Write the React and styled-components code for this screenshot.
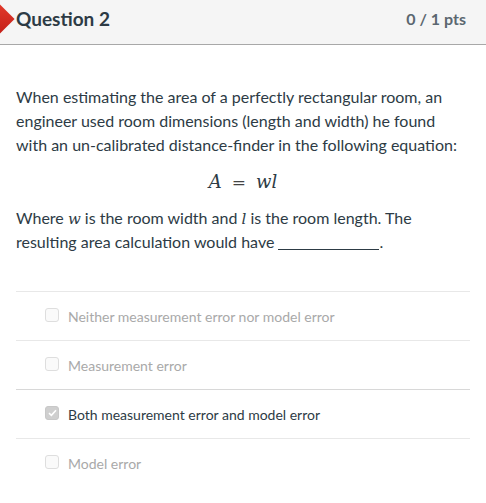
import styled, { createGlobalStyle } from 'styled-components';

const GlobalStyle = createGlobalStyle`
  html, body {
    margin: 0;
    padding: 0;
    background: #fff;
    font-family: Lato, "Liberation Sans", sans-serif;
    color: #2d3b45;
  }
`;

const Page = styled.div`
  width: 486px;
  height: 503px;
  overflow: hidden;
  background: #fff;
`;

const Header = styled.div`
  position: relative;
  box-sizing: border-box;
  height: 45px;
  background: #f5f5f5;
  border-bottom: 1px solid #a8a8a8;
  display: flex;
  align-items: center;
  justify-content: space-between;
  padding: 0 20px 7px 16px;
`;

const Flag = styled.span`
  position: absolute;
  left: -12px;
  top: 8px;
  width: 22px;
  height: 22px;
  background: linear-gradient(135deg, #e23a2c, #c41f18);
  transform: rotate(45deg);
`;

const Title = styled.h2`
  margin: 0;
  font-size: 19px;
  font-weight: 700;
  color: #2d3b45;
`;

const Points = styled.div`
  font-size: 16px;
  font-weight: 700;
  color: #5b6770;
`;

const Body = styled.div`
  padding: 40px 16px 0 16px;
`;

const Text = styled.p`
  margin: 0;
  font-size: 16px;
  line-height: 24px;
  color: #2d3b45;
`;

const Equation = styled.div`
  margin: 10px 0 10px;
  text-align: center;
  font-size: 18px;
  line-height: 28px;
  color: #2d3b45;
`;

const MathVar = styled.i`
  font-family: "DejaVu Serif", "Liberation Serif", serif;
  font-size: ${p => (p.$big ? '18px' : '15px')};
  font-style: italic;
  line-height: 1;
`;

const Eq = styled.span`
  display: inline-block;
  margin: 0 10px;
  font-family: "DejaVu Serif", serif;
  font-size: 17px;
  color: #444;
`;

const Blank = styled.span`
  display: inline-block;
  width: 101px;
  border-bottom: 1px solid #2d3b45;
  vertical-align: -2px;
`;

const Answers = styled.div`
  margin-top: 37px;
`;

const Answer = styled.label`
  display: flex;
  align-items: center;
  gap: 9px;
  height: 48px;
  border-top: 1px solid ${p => (p.$darker ? '#d8d8d8' : '#e8e8e8')};
  padding-left: 29px;
  font-size: 14px;
  color: ${p => (p.$selected ? '#2d3b45' : '#a9a9a9')};
`;

const Box = styled.span`
  width: 12px;
  height: 12px;
  border-radius: 3px;
  border: 1px solid ${p => (p.$checked ? '#c8c8c8' : '#dedede')};
  background: ${p => (p.$checked ? '#cfcfcf' : '#fafafa')};
  display: inline-flex;
  align-items: center;
  justify-content: center;
  flex-shrink: 0;
  margin-top: -2px;
`;

const answers = [
  { text: 'Neither measurement error nor model error' },
  { text: 'Measurement error' },
  { text: 'Both measurement error and model error', selected: true, darker: true },
  { text: 'Model error' }
];

const App = () => {
  return (
    <Page>
      <GlobalStyle />
      <Header>
        <Flag />
        <Title>Question 2</Title>
        <Points>0 / 1 pts</Points>
      </Header>
      <Body>
        <Text>
          When estimating the area of a perfectly rectangular room, an
          engineer used room dimensions (length and width) he found
          with an un-calibrated distance-finder in the following equation:
        </Text>
        <Equation>
          <MathVar $big>A</MathVar>
          <Eq>=</Eq>
          <MathVar $big>wl</MathVar>
        </Equation>
        <Text>
          Where <MathVar>w</MathVar> is the room width and <MathVar>l</MathVar> is the room length. The
          resulting area calculation would have <Blank />.
        </Text>
        <Answers>
          {answers.map(a => (
            <Answer key={a.text} $selected={a.selected} $darker={a.darker}>
              <Box $checked={a.selected}>
                {a.selected && (
                  <svg width="9" height="8" viewBox="0 0 9 8">
                    <path
                      d="M1 4.2 L3.4 6.4 L8 1.2"
                      fill="none"
                      stroke="#fff"
                      strokeWidth="1.6"
                    />
                  </svg>
                )}
              </Box>
              {a.text}
            </Answer>
          ))}
        </Answers>
      </Body>
    </Page>
  );
};

export default App;
